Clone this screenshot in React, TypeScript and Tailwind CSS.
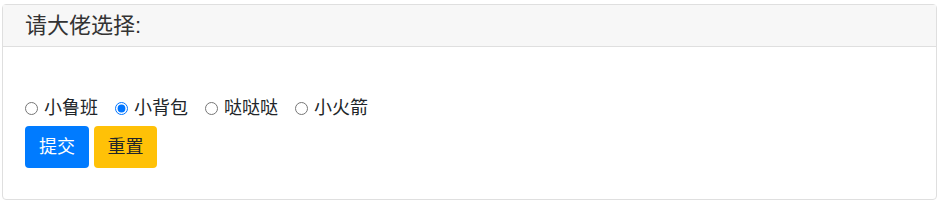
export default function App() {
  const options = ["小鲁班", "小背包", "哒哒哒", "小火箭"];
  return (
    <div
      className="pl-[2px] pr-[4px] pt-[4px] text-[#212529]"
      style={{ fontFamily: '"Liberation Sans", "Noto Sans CJK SC", sans-serif' }}
    >
      <div className="flex h-[196px] flex-col rounded-[4px] border border-[#dfdfdf] bg-white">
        <div className="flex h-[42px] shrink-0 items-center border-b border-[#dfdfdf] bg-[#f7f7f7] px-[22px] text-[22px] text-[#333]">
          请大佬选择:
        </div>
        <div className="flex flex-col px-[22px] pt-[49px]">
          <div className="flex h-[24px] items-center text-[18px]">
            {options.map((o, i) => (
              <label key={o} className="mr-[17px] flex items-center">
                <input
                  type="radio"
                  name="pick"
                  defaultChecked={i === 1}
                  className="m-0 mr-[6px] h-[13px] w-[13px] accent-[#0075ff]"
                />
                {o}
              </label>
            ))}
          </div>
          <div className="mt-[6px] flex gap-[5px]">
            <button className="h-[42px] w-[64px] rounded-[4px] bg-[#007bff] text-[18px] text-white">
              提交
            </button>
            <button className="h-[42px] w-[63px] rounded-[4px] bg-[#ffc107] text-[18px] text-[#212529]">
              重置
            </button>
          </div>
        </div>
      </div>
    </div>
  );
}
